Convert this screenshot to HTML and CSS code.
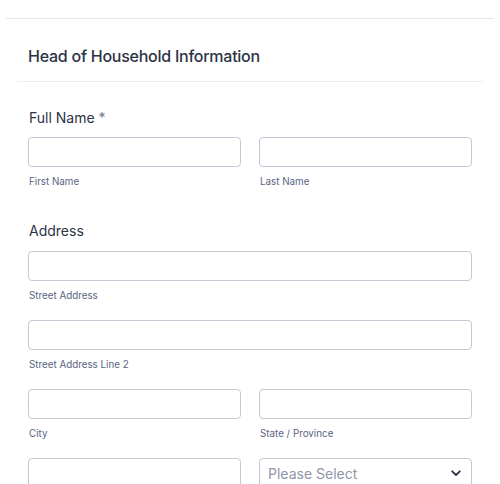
FILE: index.html
```html
<!DOCTYPE html>
<html>
<head>
<meta charset="utf-8">
<link rel="stylesheet" href="styles.css">
</head>
<body>
<div class="top-line"></div>
<div class="header"><h2 class="title">Head of Household Information</h2></div>
<div class="form">
  <div class="section">
    <div class="label">Full Name <span class="req">*</span></div>
    <div class="row">
      <div class="field"><div class="input"></div><div class="sub">First Name</div></div>
      <div class="field"><div class="input"></div><div class="sub">Last Name</div></div>
    </div>
  </div>
  <div class="section">
    <div class="label addr">Address</div>
    <div class="field"><div class="input"></div><div class="sub">Street Address</div></div>
    <div class="field"><div class="input"></div><div class="sub">Street Address Line 2</div></div>
    <div class="row">
      <div class="field"><div class="input"></div><div class="sub">City</div></div>
      <div class="field"><div class="input"></div><div class="sub">State / Province</div></div>
    </div>
    <div class="row">
      <div class="field"><div class="input"></div></div>
      <div class="field"><div class="input select"><span class="ph">Please Select</span>
        <svg class="chev" width="10" height="7" viewBox="0 0 10 7"><path d="M1.2 1.3 L5 5 L8.8 1.3" fill="none" stroke="#2c3345" stroke-width="1.8" stroke-linecap="round" stroke-linejoin="round"/></svg>
      </div></div>
    </div>
  </div>
</div>
</body>
</html>
```
FILE: styles.css
```css
* { box-sizing: border-box; }
html, body { margin: 0; padding: 0; background: #fff; }
body { font-family: Inter, "Noto Sans", sans-serif; color: #2c3345; overflow: hidden; height: 484px; }
.top-line { margin: 18px 6px 0; height: 1px; background: #e4e5ea; }
.header { margin: 0 17px; padding: 27px 11px 15px; border-bottom: 1px solid #ecedf1; }
.title { margin: 0; font-size: 16px; line-height: 20px; font-weight: 500; color: #2c3345; letter-spacing: -0.25px; }
.form { padding: 26px 28px 0 28px; }
.section { margin-bottom: 15px; }
.label { font-size: 14px; line-height: 20px; font-weight: 400; margin-bottom: 9px; padding-left: 1px; color: #2c3345; }
.label.addr { margin-bottom: 10px; }
.req { color: #6f7888; }
.row { display: flex; gap: 18px; }
.row .field { flex: 1; }
.field { margin-bottom: 17px; }
.input { height: 30px; border: 1px solid #c5c9d6; border-radius: 4px; background: #fff; }
.sub { margin-top: 8px; padding-left: 1px; font-size: 9.8px; line-height: 14px; height: 14px; color: #57647e; }
.select { display: flex; align-items: center; justify-content: space-between; padding: 0 8px 0 8px; }
.ph { font-size: 14px; color: #8f96a8; }
.chev { margin-right: 2px; }
```
